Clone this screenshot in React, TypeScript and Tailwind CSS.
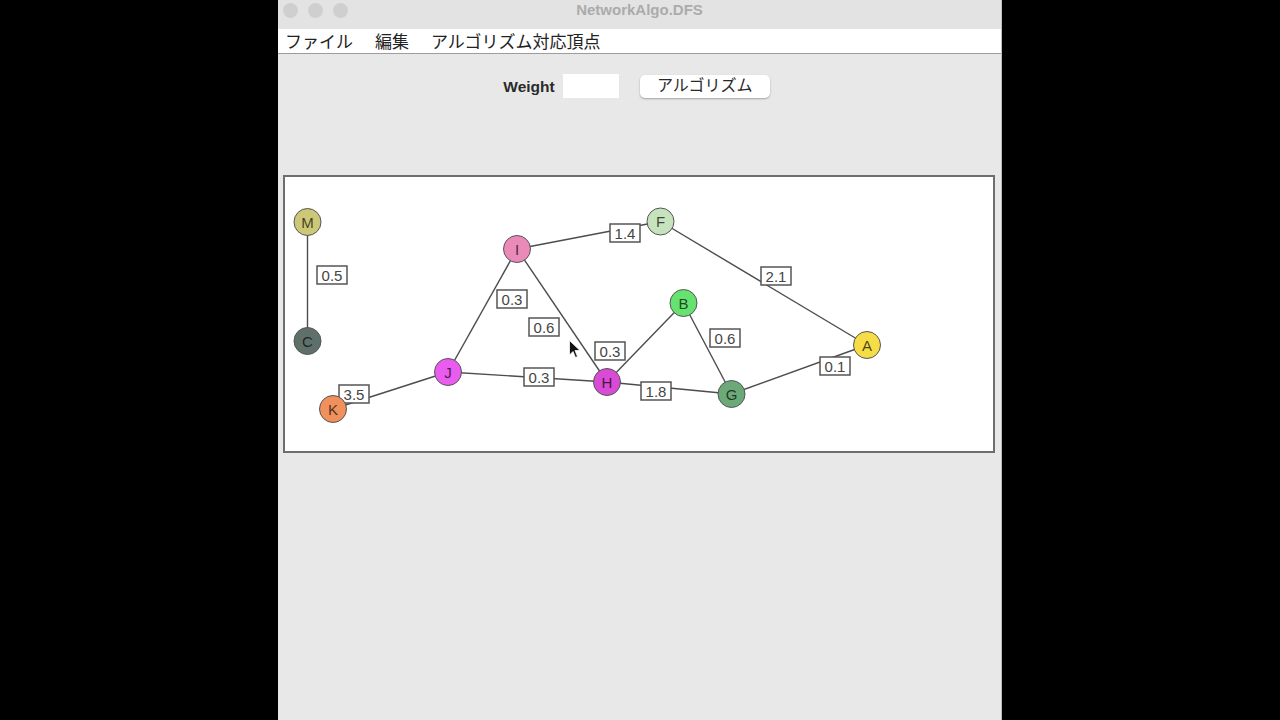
import React from 'react';

type Node = { id: string; x: number; y: number; fill: string };
type Edge = { a: string; b: string; w: string; lx: number; ly: number };

// page coordinates, shifted into the canvas by the <g> transform
const nodes: Node[] = [
  { id: 'M', x: 307.5, y: 222, fill: '#cdc877' },
  { id: 'C', x: 307.5, y: 341, fill: '#5f6f6a' },
  { id: 'K', x: 333, y: 409, fill: '#ef905d' },
  { id: 'J', x: 448, y: 372, fill: '#ea5bef' },
  { id: 'I', x: 517, y: 249, fill: '#ea8ab8' },
  { id: 'H', x: 607, y: 382, fill: '#d94bd4' },
  { id: 'F', x: 660.5, y: 221.5, fill: '#c6e3be' },
  { id: 'B', x: 683.5, y: 303, fill: '#66e270' },
  { id: 'G', x: 731.5, y: 394, fill: '#6ca979' },
  { id: 'A', x: 867, y: 345, fill: '#f6dc45' },
];

// label box top-left
const edges: Edge[] = [
  { a: 'M', b: 'C', w: '0.5', lx: 317, ly: 266 },
  { a: 'K', b: 'J', w: '3.5', lx: 339, ly: 385 },
  { a: 'J', b: 'I', w: '0.3', lx: 497, ly: 290 },
  { a: 'I', b: 'H', w: '0.6', lx: 529, ly: 318 },
  { a: 'J', b: 'H', w: '0.3', lx: 524, ly: 368 },
  { a: 'I', b: 'F', w: '1.4', lx: 610, ly: 224 },
  { a: 'H', b: 'B', w: '0.3', lx: 595, ly: 342 },
  { a: 'B', b: 'G', w: '0.6', lx: 710, ly: 329 },
  { a: 'H', b: 'G', w: '1.8', lx: 641, ly: 382 },
  { a: 'G', b: 'A', w: '0.1', lx: 820, ly: 357 },
  { a: 'F', b: 'A', w: '2.1', lx: 761, ly: 267 },
];

const find = (id: string) => nodes.find((n) => n.id === id)!;

const GraphCanvas: React.FC = () => (
  <svg width={708} height={274} className="block">
    <g transform="translate(-285,-177)">
      {edges.map((e, i) => {
        const a = find(e.a);
        const b = find(e.b);
        return <line key={i} x1={a.x} y1={a.y} x2={b.x} y2={b.y} stroke="#4d4d4d" strokeWidth={1.4} />;
      })}
      {edges.map((e, i) => (
        <g key={i}>
          <rect x={e.lx} y={e.ly} width={30} height={18} fill="#ffffff" stroke="#555555" strokeWidth={1.5} />
          <text
            x={e.lx + 15}
            y={e.ly + 14.5}
            textAnchor="middle"
            fontFamily="'Liberation Sans', Arial, sans-serif"
            fontSize={15}
            fill="#454545"
          >
            {e.w}
          </text>
        </g>
      ))}
      {nodes.map((n) => (
        <g key={n.id}>
          <circle cx={n.x} cy={n.y} r={13.5} fill={n.fill} stroke="#555555" strokeWidth={1} />
          <text
            x={n.x}
            y={n.y + 5.5}
            textAnchor="middle"
            fontFamily="'Liberation Sans', Arial, sans-serif"
            fontSize={15}
            fill="rgba(0,0,0,0.7)"
          >
            {n.id}
          </text>
        </g>
      ))}
      {/* mouse pointer */}
      <path
        d="M569.5 340.5 L569.5 355 L573 351.5 L575.5 357.5 L577.5 356.5 L575 350.5 L580 350.5 Z"
        fill="#111111"
        stroke="#ffffff"
        strokeWidth={0.8}
      />
    </g>
  </svg>
);

const App: React.FC = () => {
  return (
    <div className="w-full h-[720px] bg-black flex justify-center" style={{ fontFamily: "'Liberation Sans', Arial, sans-serif" }}>
      <div className="w-[724px] h-full flex flex-col bg-[#e8e8e8] border-r border-[#bdbdbd]">
        {/* title bar */}
        <div className="h-[29px] bg-[#e3e3e3] flex items-center relative">
          <div className="flex items-center gap-[10px] pl-[5px] -mt-[8px]">
            <span className="w-[15px] h-[15px] rounded-full bg-[#cfcfcf]" />
            <span className="w-[15px] h-[15px] rounded-full bg-[#cfcfcf]" />
            <span className="w-[15px] h-[15px] rounded-full bg-[#cfcfcf]" />
          </div>
          <div className="absolute inset-x-0 top-[-1px] text-center text-[15px] font-bold text-[#ababab] pointer-events-none">
            NetworkAlgo.DFS
          </div>
        </div>

        {/* menu bar */}
        <div
          className="h-[25px] bg-white border-b border-[#9d9d9d] flex items-center gap-[22px] pl-[7px] text-[17px] text-[#222]"
          style={{ fontFamily: "'Noto Sans CJK JP', sans-serif" }}
        >
          <span>ファイル</span>
          <span>編集</span>
          <span>アルゴリズム対応頂点</span>
        </div>

        {/* toolbar */}
        <div className="flex items-center justify-center pt-[20px] pr-[6px]">
          <span className="text-[15.5px] font-bold text-[#2a2a2a] leading-none mt-[1px]">Weight</span>
          <div className="w-[56px] h-[24px] bg-white ml-[8px]" />
          <button
            className="ml-[21px] w-[130px] h-[23px] bg-white rounded-[5px] shadow-[0_1px_2px_rgba(0,0,0,0.3)] text-[16px] text-[#2a2a2a] flex items-center justify-center leading-none pb-[4px]"
            style={{ fontFamily: "'Noto Sans CJK JP', sans-serif" }}
          >
            アルゴリズム
          </button>
        </div>

        {/* graph canvas */}
        <div className="ml-[5px] mt-[77px] w-[712px] h-[278px] bg-white border-2 border-[#6e6e6e]">
          <GraphCanvas />
        </div>
      </div>
    </div>
  );
};

export default App;
